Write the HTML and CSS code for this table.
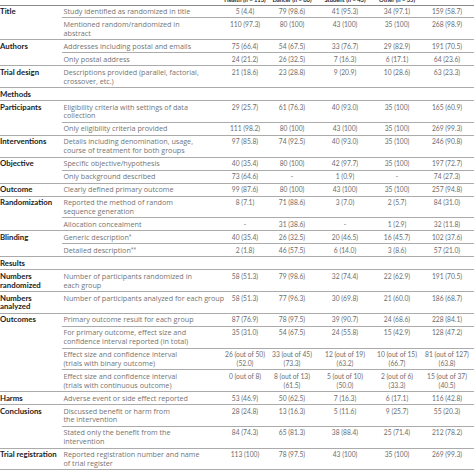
FILE: index.html
```html
<!DOCTYPE html>
<html lang="en">
<head>
<meta charset="utf-8">
<title>CONSORT items reporting</title>
<link rel="stylesheet" href="styles.css">
</head>
<body>
<table class="tbl">
  <colgroup>
    <col class="c-lbl"><col class="c-desc"><col class="c-n1"><col class="c-n2"><col class="c-n3"><col class="c-n4"><col class="c-n5">
  </colgroup>
  <thead>
    <tr class="hdr">
      <th></th><th></th>
      <th>Health (n = 113)</th>
      <th>Dancer (n = 80)</th>
      <th>Student (n = 43)</th>
      <th>Other (n = 35)</th>
      <th></th>
    </tr>
  </thead>
  <tbody>
    <tr>
      <td class="lbl" rowspan="2">Title</td>
      <td class="desc">Study identified as randomized in title</td>
      <td class="num">5 (4.4)</td><td class="num">79 (98.6)</td><td class="num">41 (95.3)</td><td class="num">34 (97.1)</td><td class="num">159 (58.7)</td>
    </tr>
    <tr>
      <td class="desc">Mentioned random/randomized in<br>abstract</td>
      <td class="num">110 (97.3)</td><td class="num">80 (100)</td><td class="num">43 (100)</td><td class="num">35 (100)</td><td class="num">268 (98.9)</td>
    </tr>
    <tr>
      <td class="lbl" rowspan="2">Authors</td>
      <td class="desc">Addresses including postal and emails</td>
      <td class="num">75 (66.4)</td><td class="num">54 (67.5)</td><td class="num">33 (76.7)</td><td class="num">29 (82.9)</td><td class="num">191 (70.5)</td>
    </tr>
    <tr>
      <td class="desc">Only postal address</td>
      <td class="num">24 (21.2)</td><td class="num">26 (32.5)</td><td class="num">7 (16.3)</td><td class="num">6 (17.1)</td><td class="num">64 (23.6)</td>
    </tr>
    <tr>
      <td class="lbl">Trial design</td>
      <td class="desc">Descriptions provided (parallel, factorial,<br>crossover, etc.)</td>
      <td class="num">21 (18.6)</td><td class="num">23 (28.8)</td><td class="num">9 (20.9)</td><td class="num">10 (28.6)</td><td class="num">63 (23.3)</td>
    </tr>
    <tr>
      <td class="lbl section" colspan="7">Methods</td>
    </tr>
    <tr>
      <td class="lbl" rowspan="2">Participants</td>
      <td class="desc">Eligibility criteria with settings of data<br>collection</td>
      <td class="num">29 (25.7)</td><td class="num">61 (76.3)</td><td class="num">40 (93.0)</td><td class="num">35 (100)</td><td class="num">165 (60.9)</td>
    </tr>
    <tr>
      <td class="desc">Only eligibility criteria provided</td>
      <td class="num">111 (98.2)</td><td class="num">80 (100)</td><td class="num">43 (100)</td><td class="num">35 (100)</td><td class="num">269 (99.3)</td>
    </tr>
    <tr>
      <td class="lbl">Interventions</td>
      <td class="desc">Details including denomination, usage,<br>course of treatment for both groups</td>
      <td class="num">97 (85.8)</td><td class="num">74 (92.5)</td><td class="num">40 (93.0)</td><td class="num">35 (100)</td><td class="num">246 (90.8)</td>
    </tr>
    <tr>
      <td class="lbl" rowspan="2">Objective</td>
      <td class="desc">Specific objective/hypothesis</td>
      <td class="num">40 (35.4)</td><td class="num">80 (100)</td><td class="num">42 (97.7)</td><td class="num">35 (100)</td><td class="num">197 (72.7)</td>
    </tr>
    <tr>
      <td class="desc">Only background described</td>
      <td class="num">73 (64.6)</td><td class="num">-</td><td class="num">1 (0.9)</td><td class="num">-</td><td class="num">74 (27.3)</td>
    </tr>
    <tr>
      <td class="lbl">Outcome</td>
      <td class="desc">Clearly defined primary outcome</td>
      <td class="num">99 (87.6)</td><td class="num">80 (100)</td><td class="num">43 (100)</td><td class="num">35 (100)</td><td class="num">257 (94.8)</td>
    </tr>
    <tr>
      <td class="lbl" rowspan="2">Randomization</td>
      <td class="desc">Reported the method of random<br>sequence generation</td>
      <td class="num">8 (7.1)</td><td class="num">71 (88.6)</td><td class="num">3 (7.0)</td><td class="num">2 (5.7)</td><td class="num">84 (31.0)</td>
    </tr>
    <tr>
      <td class="desc">Allocation concealment</td>
      <td class="num">-</td><td class="num">31 (38.6)</td><td class="num">-</td><td class="num">1 (2.9)</td><td class="num">32 (11.8)</td>
    </tr>
    <tr>
      <td class="lbl" rowspan="2">Blinding</td>
      <td class="desc">Generic description<sup>*</sup></td>
      <td class="num">40 (35.4)</td><td class="num">26 (32.5)</td><td class="num">20 (46.5)</td><td class="num">16 (45.7)</td><td class="num">102 (37.6)</td>
    </tr>
    <tr>
      <td class="desc">Detailed description<sup>**</sup></td>
      <td class="num">2 (1.8)</td><td class="num">46 (57.5)</td><td class="num">6 (14.0)</td><td class="num">3 (8.6)</td><td class="num">57 (21.0)</td>
    </tr>
    <tr>
      <td class="lbl section" colspan="7">Results</td>
    </tr>
    <tr>
      <td class="lbl">Numbers<br>randomized</td>
      <td class="desc">Number of participants randomized in<br>each group</td>
      <td class="num">58 (51.3)</td><td class="num">79 (98.6)</td><td class="num">32 (74.4)</td><td class="num">22 (62.9)</td><td class="num">191 (70.5)</td>
    </tr>
    <tr>
      <td class="lbl">Numbers<br>analyzed</td>
      <td class="desc">Number of participants analyzed for each group</td>
      <td class="num">58 (51.3)</td><td class="num">77 (96.3)</td><td class="num">30 (69.8)</td><td class="num">21 (60.0)</td><td class="num">186 (68.7)</td>
    </tr>
    <tr>
      <td class="lbl" rowspan="4">Outcomes</td>
      <td class="desc">Primary outcome result for each group</td>
      <td class="num">87 (76.9)</td><td class="num">78 (97.5)</td><td class="num">39 (90.7)</td><td class="num">24 (68.6)</td><td class="num">228 (84.1)</td>
    </tr>
    <tr>
      <td class="desc">For primary outcome, effect size and<br>confidence interval reported (in total)</td>
      <td class="num">35 (31.0)</td><td class="num">54 (67.5)</td><td class="num">24 (55.8)</td><td class="num">15 (42.9)</td><td class="num">128 (47.2)</td>
    </tr>
    <tr>
      <td class="desc">Effect size and confidence interval<br>(trials with binary outcome)</td>
      <td class="num">26 (out of 50)<br>(52.0)</td><td class="num">33 (out of 45)<br>(73.3)</td><td class="num">12 (out of 19)<br>(63.2)</td><td class="num">10 (out of 15)<br>(66.7)</td><td class="num">81 (out of 127)<br>(63.8)</td>
    </tr>
    <tr>
      <td class="desc">Effect size and confidence interval<br>(trials with continuous outcome)</td>
      <td class="num">0 (out of 8)</td><td class="num">8 (out of 13)<br>(61.5)</td><td class="num">5 (out of 10)<br>(50.0)</td><td class="num">2 (out of 6)<br>(33.3)</td><td class="num">15 (out of 37)<br>(40.5)</td>
    </tr>
    <tr>
      <td class="lbl">Harms</td>
      <td class="desc">Adverse event or side effect reported</td>
      <td class="num">53 (46.9)</td><td class="num">50 (62.5)</td><td class="num">7 (16.3)</td><td class="num">6 (17.1)</td><td class="num">116 (42.8)</td>
    </tr>
    <tr>
      <td class="lbl" rowspan="2">Conclusions</td>
      <td class="desc">Discussed benefit or harm from<br>the intervention</td>
      <td class="num">28 (24.8)</td><td class="num">13 (16.3)</td><td class="num">5 (11.6)</td><td class="num">9 (25.7)</td><td class="num">55 (20.3)</td>
    </tr>
    <tr>
      <td class="desc">Stated only the benefit from the<br>intervention</td>
      <td class="num">84 (74.3)</td><td class="num">65 (81.3)</td><td class="num">38 (88.4)</td><td class="num">25 (71.4)</td><td class="num">212 (78.2)</td>
    </tr>
    <tr>
      <td class="lbl">Trial registration</td>
      <td class="desc">Reported registration number and name<br>of trial register</td>
      <td class="num">113 (100)</td><td class="num">78 (97.5)</td><td class="num">43 (100)</td><td class="num">35 (100)</td><td class="num">269 (99.3)</td>
    </tr>
  </tbody>
</table>
</body>
</html>
```
FILE: styles.css
```css
html, body {
  margin: 0;
  padding: 0;
  background: #ffffff;
  overflow: hidden;
}

body {
  font-family: "Open Sans", "Liberation Sans", sans-serif;
}

.tbl {
  border-collapse: collapse;
  table-layout: fixed;
  width: 474px;
  margin-top: -3.7px;
}

.c-lbl { width: 62px; }
.c-desc { width: 160px; }
.c-n1 { width: 46px; }
.c-n2 { width: 48px; }
.c-n3 { width: 58px; }
.c-n4 { width: 46px; }
.c-n5 { width: 54px; }

.hdr th {
  font-family: Lato, "Liberation Sans", sans-serif;
  font-size: 5.8px;
  line-height: 6px;
  font-weight: 700;
  color: #222222;
  white-space: nowrap;
  text-align: center;
  padding: 1px 0 1.2px;
  border-bottom: 1.5px solid #8a8a8a;
}

.tbl td {
  font-size: 7.2px;
  line-height: 8.8px;
  padding: 1.6px 1px;
  vertical-align: top;
  color: #747474;
  border-bottom: 1px solid #ababab;
}

.tbl td.lbl {
  font-family: Lato, "Liberation Sans", sans-serif;
  font-weight: 700;
  font-size: 7.8px;
  color: #1c1c1c;
  white-space: nowrap;
  padding-left: 0;
  padding-right: 1px;
}

.tbl td.desc {
  white-space: nowrap;
  padding-left: 1.5px;
}

.tbl td.num {
  font-family: Lato, "Liberation Sans", sans-serif;
  font-size: 6.7px;
  color: #6e6e6e;
  text-align: center;
  white-space: nowrap;
  padding-left: 0;
  padding-right: 0;
}

.desc sup {
  font-size: 5px;
  line-height: 0;
  vertical-align: 2px;
}
```
